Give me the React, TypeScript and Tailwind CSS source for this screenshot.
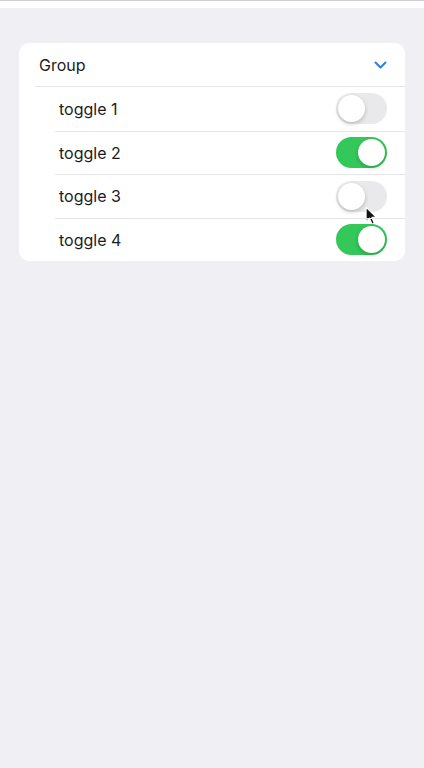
import { useState } from 'react';

const Toggle = ({ on, onChange }: { on: boolean; onChange: () => void }) => (
  <button
    onClick={onChange}
    className={`relative w-[51px] h-[31px] rounded-full transition-colors ${on ? 'bg-[#34c759]' : 'bg-[#e9e9eb]'}`}
  >
    <span
      className={`absolute top-[2px] w-[27px] h-[27px] rounded-full bg-white shadow-[0_2px_4px_rgba(0,0,0,0.2)] transition-all ${on ? 'left-[22px]' : 'left-[2px]'}`}
    />
  </button>
);

const App = () => {
  const [toggles, setToggles] = useState([false, true, false, true]);

  return (
    <div className="min-h-screen bg-[#efeff4]" style={{ fontFamily: 'Inter, "Noto Sans", sans-serif' }}>
      {/* Top bar */}
      <div className="h-[8px] bg-white border-t border-[#cfcfcf]" />

      <div className="px-[19px] pt-[35px]">
        <div className="bg-white rounded-[10px] overflow-hidden">
          {/* Header */}
          <div className="h-[43px] flex items-center justify-between pl-[20px] pr-[18px]">
            <span className="text-[16px] text-[#1c1c1e]">Group</span>
            <svg width="13" height="8" viewBox="0 0 13 8" fill="none">
              <path d="M1.5 1.5L6.5 6.5L11.5 1.5" stroke="#2f7de1" strokeWidth="2" strokeLinecap="round" strokeLinejoin="round" />
            </svg>
          </div>

          {/* Toggles */}
          <div className="ml-[16px] border-t border-[#e6e6e8]">
            {toggles.map((on, i) => (
              <div key={i} className={`ml-[20px] h-[43.5px] flex items-center justify-between pl-[4px] pr-[18px] relative ${i > 0 ? 'border-t border-[#e6e6e8]' : ''}`}>
                <span className="text-[16px] text-[#1c1c1e]">toggle {i + 1}</span>
                <Toggle on={on} onChange={() => setToggles(t => t.map((v, j) => (j === i ? !v : v)))} />
                {i === 2 && (
                  <svg className="absolute left-[310px] top-[31px] pointer-events-none" width="13" height="20" viewBox="0 0 12 18">
                    <path d="M1 1L1 14L4.2 11L6.5 16.5L8.5 15.6L6.3 10.3L10.5 10.3Z" fill="#111" stroke="#fff" strokeWidth="1" strokeLinejoin="round" />
                  </svg>
                )}
              </div>
            ))}
          </div>
        </div>
      </div>
    </div>
  );
};

export default App;
